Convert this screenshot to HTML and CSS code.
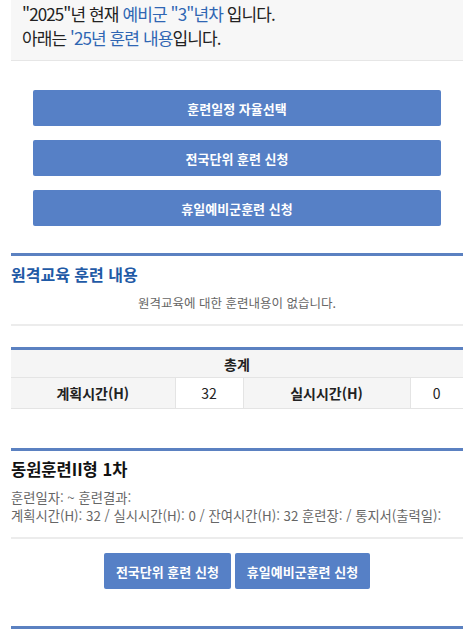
FILE: index.html
```html
<!DOCTYPE html>
<html lang="ko">
<head>
<meta charset="utf-8">
<title>예비군 훈련</title>
<link rel="stylesheet" href="styles.css">
</head>
<body>
<div class="page">
  <div class="notice">
    <p>"2025"년 현재 <span class="hl">예비군 "3"년차</span> 입니다.</p>
    <p>아래는 <span class="hl">'25년 훈련 내용</span>입니다.</p>
  </div>

  <div class="btn-stack">
    <a class="btn">훈련일정 자율선택</a>
    <a class="btn">전국단위 훈련 신청</a>
    <a class="btn">휴일예비군훈련 신청</a>
  </div>

  <section class="sec remote">
    <h2 class="sec-title blue">원격교육 훈련 내용</h2>
    <p class="empty">원격교육에 대한 훈련내용이 없습니다.</p>
  </section>

  <table class="total">
    <tr><th colspan="4">총계</th></tr>
    <tr>
      <th class="c1">계획시간(H)</th>
      <td class="c2">32</td>
      <th class="c3">실시시간(H)</th>
      <td class="c4">0</td>
    </tr>
  </table>

  <section class="sec train">
    <h2 class="sec-title">동원훈련II형 1차</h2>
    <div class="info">
      <p>훈련일자: ~ 훈련결과:</p>
      <p>계획시간(H): 32 / 실시시간(H): 0 / 잔여시간(H): 32 훈련장: / 통지서(출력일):</p>
    </div>
    <div class="btn-row">
      <a class="btn sm">전국단위 훈련 신청</a>
      <a class="btn sm">휴일예비군훈련 신청</a>
    </div>
  </section>

  <div class="sec next"></div>
</div>
</body>
</html>
```

FILE: styles.css
```css
* { box-sizing: border-box; }
html, body { margin: 0; padding: 0; background: #fff; }
body {
  font-family: "Noto Sans CJK KR", "Noto Sans", sans-serif;
  color: #222;
}
p { margin: 0; }
.page { padding: 0 11px; }

.notice {
  background: #f7f7f7;
  border-bottom: 1px solid #e6e6e6;
  padding: 2px 11px 10px;
  font-size: 17px;
  line-height: 24px;
  letter-spacing: -0.9px;
  color: #222;
}
.hl { color: #2f66b3; }

.btn-stack {
  display: flex;
  flex-direction: column;
  gap: 14px;
  margin: 29px 22px 0 22px;
}
.btn {
  display: flex;
  align-items: center;
  justify-content: center;
  height: 36px;
  background: #5680c6;
  color: #fff;
  font-weight: 700;
  font-size: 13px;
  border-radius: 2px;
  text-decoration: none;
}

.sec { border-top: 3px solid #5b81c1; }
.remote {
  margin-top: 27px;
  border-bottom: 2px solid #ececec;
  padding-bottom: 12px;
}
.sec-title {
  margin: 0;
  font-size: 16px;
  font-weight: 700;
  line-height: 24px;
  padding-top: 6px;
  color: #111;
}
.sec-title.blue { color: #1f5aa6; }
.empty {
  text-align: center;
  font-size: 12.5px;
  color: #666;
  line-height: 18px;
  margin-top: 8px;
}

.total {
  width: 100%;
  border-collapse: collapse;
  margin-top: 21px;
  border-top: 3px solid #5b81c1;
  font-size: 14px;
}
.total th, .total td {
  border: 1px solid #e4e4e4;
  border-top: 0;
  text-align: center;
  padding: 0;
}
.total tr:first-child th { height: 29px; background: #f5f5f5; }
.total tr:nth-child(2) th, .total tr:nth-child(2) td { height: 31px; }
.total th { background: #f5f5f5; font-weight: 700; color: #222; }
.total td { background: #fff; font-weight: 400; color: #222; }
.total tr > *:first-child { border-left: 0; }
.total tr > *:last-child { border-right: 0; }
.c1 { width: 164px; }
.c2 { width: 68px; }
.c3 { width: 167px; }

.train { margin-top: 39px; }
.train .sec-title { font-size: 16.5px; padding-top: 6px; }
.info {
  margin-top: 8px;
  font-size: 13.3px;
  line-height: 18px;
  color: #666;
  padding-bottom: 12px;
  border-bottom: 2px solid #ececec;
}
.btn-row {
  display: flex;
  justify-content: center;
  gap: 4px;
  margin-top: 14px;
}
.btn.sm { height: 36px; padding: 0 12px; }
.next { margin-top: 37px; height: 10px; }
```
